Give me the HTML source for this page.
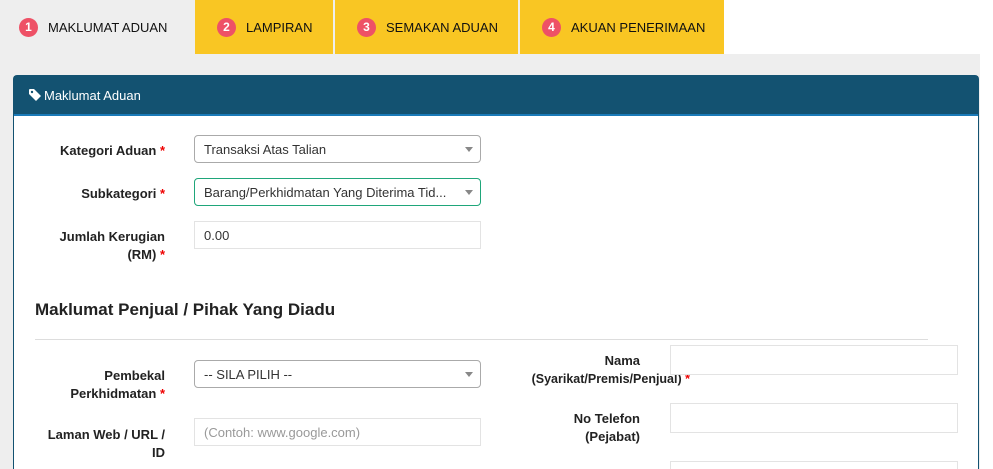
<!DOCTYPE html>
<html><head><style>
*{box-sizing:border-box;margin:0;padding:0}
html,body{width:993px;height:469px;overflow:hidden}
body{background:#eeeeee;font-family:"Liberation Sans",sans-serif;position:relative;color:#222}
.topwhite{position:absolute;left:724px;top:0;width:269px;height:54px;background:#fff}
.rwhite{position:absolute;left:980px;top:54px;width:13px;height:415px;background:#fff}
.tab{position:absolute;top:0;height:54px;font-size:13px;display:flex;align-items:center;color:#111}
.tab .n{width:19px;height:19px;border-radius:50%;background:#ee5166;color:#fff;font-weight:bold;font-size:12px;display:inline-flex;align-items:center;justify-content:center;margin-right:10px}
.y{background:#f9c623}
.panel{position:absolute;left:13px;top:75px;width:966px;height:394px;background:#fff;border:1px solid #135271;border-bottom:none;border-radius:4px 4px 0 0}
.ph{position:absolute;left:0;top:0;right:0;height:40px;background:#135271;color:#fff;font-size:13px;display:flex;align-items:center;padding-left:15px;border-bottom:2px solid #1a7ab8}
.lbl{position:absolute;font-size:13px;font-weight:bold;text-align:right;line-height:18px;color:#222}
.st{color:#e00}
.inp{position:absolute;height:28px;border:1px solid #e3e3e3;background:#fff;font-size:13px;padding-left:9px;display:flex;align-items:center;color:#333}
.sel{border:1px solid #aaa;border-radius:4px}
.sel:after{content:"";position:absolute;right:7px;top:11px;border-left:4px solid transparent;border-right:4px solid transparent;border-top:5px solid #888}
.ph2{color:#999}
</style></head><body>
<div class="topwhite"></div>
<div class="rwhite"></div>
<div class="tab" style="left:0;width:193px;padding-left:19px"><span class="n">1</span>MAKLUMAT ADUAN</div>
<div class="tab y" style="left:195px;width:138px;padding-left:22px"><span class="n">2</span>LAMPIRAN</div>
<div class="tab y" style="left:335px;width:183px;padding-left:22px"><span class="n">3</span>SEMAKAN ADUAN</div>
<div class="tab y" style="left:520px;width:204px;padding-left:22px"><span class="n">4</span>AKUAN PENERIMAAN</div>
<div class="panel">
<div class="ph"><svg width="12" height="12" viewBox="0 0 12 12" style="margin-right:3px"><path d="M0 1 Q0 0 1 0 H5 L12 7 L7 12 L0 5 Z" fill="#fff"/><circle cx="3" cy="3" r="1.2" fill="#135271"/></svg>Maklumat Aduan</div>
</div>
<div class="lbl" style="left:30px;top:142px;width:135px">Kategori Aduan <span class="st">*</span></div>
<div class="inp sel" style="left:194px;top:135px;width:287px">Transaksi Atas Talian</div>
<div class="lbl" style="left:30px;top:185px;width:135px">Subkategori <span class="st">*</span></div>
<div class="inp sel" style="left:194px;top:178px;width:287px;border-color:#1fa67a">Barang/Perkhidmatan Yang Diterima Tid...</div>
<div class="lbl" style="left:30px;top:228px;width:135px">Jumlah Kerugian<br>(RM) <span class="st">*</span></div>
<div class="inp" style="left:194px;top:221px;width:287px">0.00</div>
<div style="position:absolute;left:35px;top:300px;font-size:17px;font-weight:bold;color:#222">Maklumat Penjual / Pihak Yang Diadu</div>
<div style="position:absolute;left:35px;top:339px;width:893px;height:1px;background:#ddd"></div>
<div class="lbl" style="left:30px;top:367px;width:135px">Pembekal<br>Perkhidmatan <span class="st">*</span></div>
<div class="inp sel" style="left:194px;top:360px;width:287px">-- SILA PILIH --</div>
<div class="lbl" style="left:30px;top:426px;width:135px">Laman Web / URL /<br>ID</div>
<div class="inp ph2" style="left:194px;top:418px;width:287px">(Contoh: www.google.com)</div>
<div class="lbl" style="left:540px;top:352px;width:100px">Nama</div>
<div class="lbl" style="left:490px;top:370px;width:200px;font-size:12.5px;white-space:nowrap">(Syarikat/Premis/Penjual) <span class="st">*</span></div>
<div class="inp" style="left:670px;top:345px;width:288px;height:30px"></div>
<div class="lbl" style="left:490px;top:410px;width:150px">No Telefon<br>(Pejabat)</div>
<div class="inp" style="left:670px;top:403px;width:288px;height:30px"></div>
<div class="inp" style="left:670px;top:461px;width:288px;height:8px;border-bottom:none"></div>
</body></html>
